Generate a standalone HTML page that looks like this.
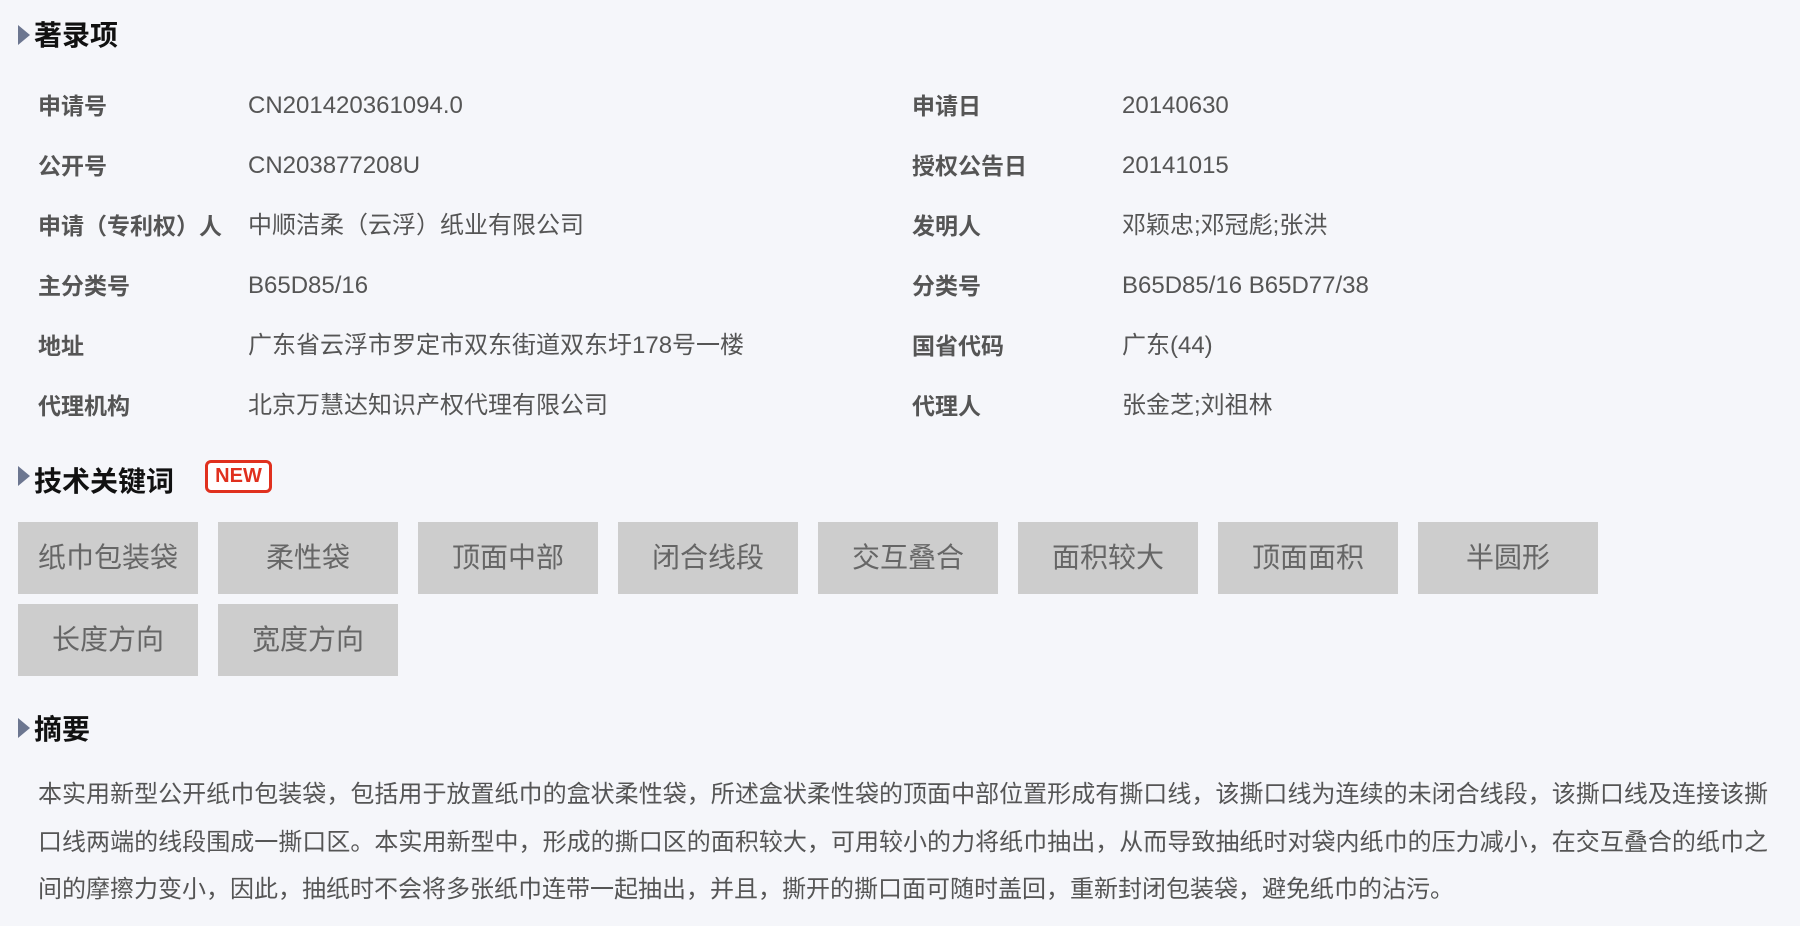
<!DOCTYPE html>
<html><head><meta charset="utf-8"><style>
*{margin:0;padding:0;box-sizing:border-box}
body{width:1800px;height:926px;background:#f5f6fa;font-family:"Liberation Sans","Noto Sans CJK SC",sans-serif;color:#555;position:relative;overflow:hidden}
.h{position:absolute;left:34px;font-size:28px;font-weight:bold;color:#111;line-height:34px}
.arr{position:absolute;left:18px;width:0;height:0;border-top:10px solid transparent;border-bottom:10px solid transparent;border-left:12px solid #6c7690}
.r{position:absolute;font-size:24px;line-height:30px;white-space:nowrap}
.l{font-weight:bold;font-size:23px}
.tag{position:absolute;width:180px;height:72px;background:#cdcdcd;color:#666;font-size:28px;line-height:72px;text-align:center}
.new{position:absolute;left:205px;top:460px;width:67px;height:33px;border:3px solid #e0301e;border-radius:6px;color:#e0301e;font-weight:bold;font-size:20px;line-height:27px;text-align:center;background:#fff}
.ab{position:absolute;left:38px;width:1730px;font-size:24px;line-height:48px;color:#555;white-space:nowrap}
.j{text-align:justify;text-align-last:justify;white-space:normal}
</style></head><body>
<div class="arr" style="top:25px"></div><div class="h" style="top:19px">著录项</div>

<div class="r l" style="left:38px;top:91px">申请号</div><div class="r" style="left:248px;top:91px">CN201420361094.0</div>
<div class="r l" style="left:912px;top:91px">申请日</div><div class="r" style="left:1122px;top:91px">20140630</div>

<div class="r l" style="left:38px;top:151px">公开号</div><div class="r" style="left:248px;top:151px">CN203877208U</div>
<div class="r l" style="left:912px;top:151px">授权公告日</div><div class="r" style="left:1122px;top:151px">20141015</div>

<div class="r l" style="left:38px;top:211px">申请（专利权）人</div><div class="r" style="left:248px;top:211px">中顺洁柔（云浮）纸业有限公司</div>
<div class="r l" style="left:912px;top:211px">发明人</div><div class="r" style="left:1122px;top:211px">邓颖忠;邓冠彪;张洪</div>

<div class="r l" style="left:38px;top:271px">主分类号</div><div class="r" style="left:248px;top:271px">B65D85/16</div>
<div class="r l" style="left:912px;top:271px">分类号</div><div class="r" style="left:1122px;top:271px">B65D85/16 B65D77/38</div>

<div class="r l" style="left:38px;top:331px">地址</div><div class="r" style="left:248px;top:331px">广东省云浮市罗定市双东街道双东圩178号一楼</div>
<div class="r l" style="left:912px;top:331px">国省代码</div><div class="r" style="left:1122px;top:331px">广东(44)</div>

<div class="r l" style="left:38px;top:391px">代理机构</div><div class="r" style="left:248px;top:391px">北京万慧达知识产权代理有限公司</div>
<div class="r l" style="left:912px;top:391px">代理人</div><div class="r" style="left:1122px;top:391px">张金芝;刘祖林</div>

<div class="arr" style="top:466px"></div><div class="h" style="top:465px">技术关键词</div>
<div class="new">NEW</div>

<div class="tag" style="left:18px;top:522px">纸巾包装袋</div>
<div class="tag" style="left:218px;top:522px">柔性袋</div>
<div class="tag" style="left:418px;top:522px">顶面中部</div>
<div class="tag" style="left:618px;top:522px">闭合线段</div>
<div class="tag" style="left:818px;top:522px">交互叠合</div>
<div class="tag" style="left:1018px;top:522px">面积较大</div>
<div class="tag" style="left:1218px;top:522px">顶面面积</div>
<div class="tag" style="left:1418px;top:522px">半圆形</div>
<div class="tag" style="left:18px;top:604px">长度方向</div>
<div class="tag" style="left:218px;top:604px">宽度方向</div>

<div class="arr" style="top:718px"></div><div class="h" style="top:713px">摘要</div>

<div class="ab j" style="top:771px">本实用新型公开纸巾包装袋，包括用于放置纸巾的盒状柔性袋，所述盒状柔性袋的顶面中部位置形成有撕口线，该撕口线为连续的未闭合线段，该撕口线及连接该撕</div>
<div class="ab j" style="top:819px">口线两端的线段围成一撕口区。本实用新型中，形成的撕口区的面积较大，可用较小的力将纸巾抽出，从而导致抽纸时对袋内纸巾的压力减小，在交互叠合的纸巾之</div>
<div class="ab" style="top:866px">间的摩擦力变小，因此，抽纸时不会将多张纸巾连带一起抽出，并且，撕开的撕口面可随时盖回，重新封闭包装袋，避免纸巾的沾污。</div>
</body></html>
